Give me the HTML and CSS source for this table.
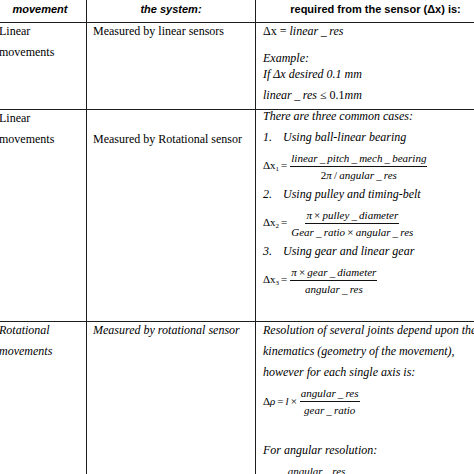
FILE: index.html
```html
<!DOCTYPE html>
<html>
<head>
<meta charset="utf-8">
<link rel="stylesheet" href="styles.css">
</head>
<body>
<div class="tbl">
  <div class="cell head it-h">movement</div>
  <div class="cell head it-h">the system:</div>
  <div class="cell head">required from the sensor (Δx) is:</div>

  <div class="cell c1"><div class="txt"><div class="ln">Linear</div><div class="ln">movements</div></div></div>
  <div class="cell c2"><div class="txt"><div class="ln">Measured by linear sensors</div></div></div>
  <div class="cell c3">
    <div class="r1">
      <div class="l16"><span class="up">Δx</span> = <i class="fx">linear _ res</i></div>
      <div class="l16 it ex">Example:</div>
      <div class="l16 it">If Δx desired 0.1 mm</div>
      <div class="l16 lim"><i class="fx">linear _ res</i> ≤ 0.1<i>mm</i></div>
    </div>
  </div>

  <div class="cell c1"><div class="txt"><div class="ln">Linear</div><div class="ln">movements</div></div></div>
  <div class="cell c2"><div class="txt"><div class="ln">&nbsp;</div><div class="ln">Measured by Rotational sensor</div></div></div>
  <div class="cell c3">
    <div class="r2">
      <div class="ln it">There are three common cases:</div>
      <div class="ln it"><span class="num">1.</span>Using ball-linear bearing</div>
      <div class="eq">
        <span class="lbl">Δx<sub>1</sub><span class="eqs">=</span></span>
        <span class="frac"><span class="nu"><i>linear _ pitch _ mech _ bearing</i></span><span class="de">2<i>π</i> / <i>angular _ res</i></span></span>
      </div>
      <div class="ln it"><span class="num">2.</span>Using pulley and timing-belt</div>
      <div class="eq">
        <span class="lbl">Δx<sub>2</sub><span class="eqs">=</span></span>
        <span class="frac"><span class="nu"><i>π</i> × <i>pulley _ diameter</i></span><span class="de"><i>Gear _ ratio</i> × <i>angular _ res</i></span></span>
      </div>
      <div class="ln it"><span class="num">3.</span>Using gear and linear gear</div>
      <div class="eq">
        <span class="lbl">Δx<sub>3</sub><span class="eqs">=</span></span>
        <span class="frac"><span class="nu"><i>π</i> × <i>gear _ diameter</i></span><span class="de"><i>angular _ res</i></span></span>
      </div>
    </div>
  </div>

  <div class="cell c1"><div class="txt it"><div class="ln">Rotational</div><div class="ln">movements</div></div></div>
  <div class="cell c2"><div class="txt it"><div class="ln">Measured by rotational sensor</div></div></div>
  <div class="cell c3">
    <div class="r3 it">
      <div class="ln">Resolution of several joints depend upon the</div>
      <div class="ln">kinematics (geometry of the movement),</div>
      <div class="ln">however for each single axis is:</div>
      <div class="eq">
        <span class="lbl">Δ<i>ρ</i><span class="eqs">=</span><i>l</i><span class="eqs">×</span></span>
        <span class="frac"><span class="nu"><i>angular _ res</i></span><span class="de"><i>gear _ ratio</i></span></span>
      </div>
      <div class="ln">&nbsp;</div>
      <div class="ln">For angular resolution:</div>
      <div class="eq">
        <span class="lbl">Δ<i>θ</i><span class="eqs">=</span></span>
        <span class="frac"><span class="nu"><i>angular _ res</i></span><span class="de"><i>gear _ ratio</i></span></span>
      </div>
    </div>
  </div>
</div>
</body>
</html>
```
FILE: styles.css
```css
html, body {
  margin: 0;
  padding: 0;
  background: #fff;
  overflow: hidden;
}
body {
  font-family: "Liberation Serif", "Times New Roman", serif;
  font-size: 12px;
  color: #000;
}
.tbl {
  display: grid;
  grid-template-columns: 93px 169px 240px;
  grid-template-rows: 27px 87px 212px 220px;
  margin: -4px 0 0 -6px;
  width: 502px;
}
.cell {
  box-sizing: border-box;
  border-right: 1px solid #1e1e1e;
  border-bottom: 1px solid #1e1e1e;
  padding: 0 6px;
  overflow: hidden;
}
.c1 { padding-left: 5px; }
.c3 { padding-left: 7px; }
.head {
  display: flex;
  align-items: center;
  justify-content: center;
  padding: 0;
  font-family: "Liberation Sans", Arial, sans-serif;
  font-size: 11px;
  font-weight: bold;
  white-space: nowrap;
}
.it-h { font-style: italic; }
.it { font-style: italic; }
.up { font-style: normal; }
.fx { word-spacing: -0.5px; }
.txt { margin-top: -2px; }
.ln {
  height: 21px;
  line-height: 21px;
  white-space: nowrap;
}
.l16 {
  height: 16px;
  line-height: 16px;
  white-space: nowrap;
}
.ex { margin-top: 11px; }
.lim { margin-top: 5px; }
.r2 { margin-top: -4px; }
.r3 { margin-top: -2px; }
.num {
  display: inline-block;
  width: 20px;
}
.eq {
  height: 36px;
  display: flex;
  align-items: center;
  font-style: normal;
  white-space: nowrap;
}
.lbl {
  font-size: 11px;
  margin-right: 1px;
}
.eqs {
  margin: 0 2px;
}
.lbl sub {
  font-size: 7px;
  vertical-align: -2px;
}
.frac {
  display: inline-flex;
  flex-direction: column;
  align-items: center;
  font-size: 11px;
  word-spacing: -0.6px;
}
.nu {
  padding: 0 1px 1px;
  line-height: 14px;
  border-bottom: 1px solid #111;
}
.de {
  padding: 1px 1px 0;
  line-height: 14px;
}
```
